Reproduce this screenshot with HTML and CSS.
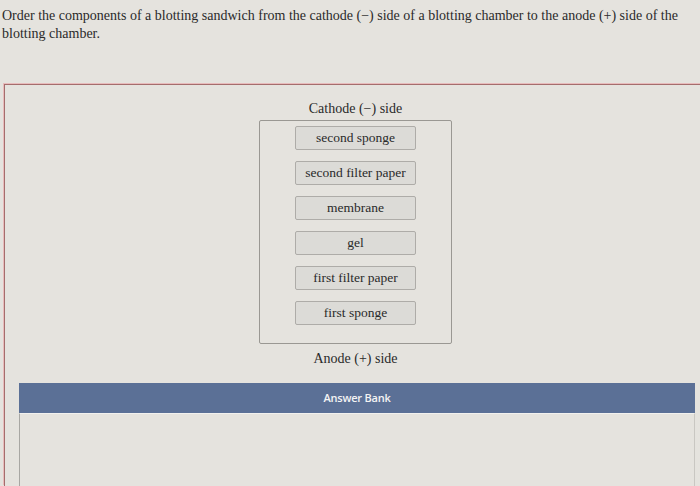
FILE: index.html
```html
<!DOCTYPE html>
<html lang="en">
<head>
<meta charset="utf-8">
<title>Blotting sandwich</title>
<link rel="stylesheet" href="styles.css">
</head>
<body>
<p class="prompt">Order the components of a blotting sandwich from the cathode (&minus;) side of a blotting chamber to the anode (+) side of the blotting chamber.</p>

<section class="panel">
  <div class="sandwich">
    <div class="end-label">Cathode (&minus;) side</div>
    <ol class="stack">
      <li class="tile">second sponge</li>
      <li class="tile">second filter paper</li>
      <li class="tile">membrane</li>
      <li class="tile">gel</li>
      <li class="tile">first filter paper</li>
      <li class="tile">first sponge</li>
    </ol>
    <div class="end-label">Anode (+) side</div>
  </div>

  <div class="bank">
    <div class="bank-head">Answer Bank</div>
    <div class="bank-body"></div>
  </div>
</section>
</body>
</html>
```

FILE: styles.css
```css
html, body {
  margin: 0;
  padding: 0;
  background: #e5e3de;
  overflow: hidden;
}

body {
  width: 700px;
  height: 486px;
  font-family: "Liberation Serif", "Times New Roman", serif;
  color: #2a2a2a;
}

.prompt {
  margin: 7px 0 0 2px;
  width: 692px;
  font-size: 14px;
  line-height: 18px;
}

/* question frame, runs off the right edge of the page */
.panel {
  margin: 41px -6px 0 4px;
  border-top: 1px solid #a56d6d;
  border-left: 1px solid #a56d6d;
  box-shadow: -1px -1px 0 #e8bcbc;
  padding-top: 15px;
  height: 386px;
}

.sandwich {
  display: flex;
  flex-direction: column;
  align-items: center;
}

.end-label {
  font-size: 14px;
  line-height: 18px;
}

.stack {
  list-style: none;
  margin: 2px 0 6px;
  padding: 5px 35px 18px;
  width: 121px;
  border: 1px solid #9a9893;
  border-radius: 2px;
  display: flex;
  flex-direction: column;
  gap: 11px;
}

.tile {
  height: 22px;
  border: 1px solid #aeaca8;
  border-radius: 2px;
  background: #dcdbd7;
  font-size: 13.5px;
  line-height: 22px;
  text-align: center;
  white-space: nowrap;
}

.bank {
  margin: 15px 11px 0 14px;
}

.bank-head {
  height: 30px;
  background: #5b7096;
  color: #f4f4f4;
  font-family: "Open Sans", "Liberation Sans", sans-serif;
  font-size: 11px;
  font-weight: 600;
  line-height: 30px;
  text-align: center;
  letter-spacing: -0.2px;
}

.bank-body {
  height: 74px;
  border-left: 1px solid #a8a7a3;
  border-right: 1px solid #c9c7c2;
  border-top: 1px solid #f2f1ee;
}
```
